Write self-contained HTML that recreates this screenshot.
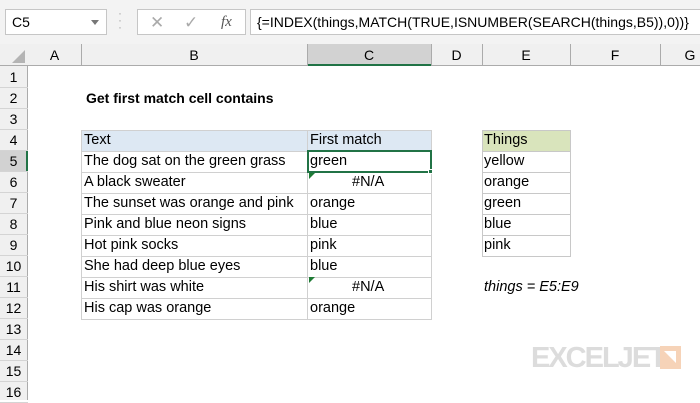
<!DOCTYPE html><html><head><style>
body{margin:0;width:700px;height:400px;overflow:hidden;background:#fff;font-family:"Liberation Sans",Calibri,sans-serif;position:relative}
.a{position:absolute;box-sizing:border-box}
.t{position:absolute;font-size:14.5px;line-height:21px;white-space:nowrap;color:#000}
</style></head><body>
<div class="a" style="left:0;top:0;width:700px;height:44px;background:#f3f3f3"></div>
<div class="a" style="left:5px;top:9px;width:102px;height:26px;background:#fff;border:1px solid #c6c6c6"></div>
<div class="t" style="left:12px;top:12px;font-size:14px">C5</div>
<div class="a" style="left:91px;top:20px;width:0;height:0;border-left:4px solid transparent;border-right:4px solid transparent;border-top:5px solid #777"></div>
<div class="t" style="left:118px;top:10px;color:#aaa;font-size:12px;line-height:7px">·<br>·<br>·</div>
<div class="a" style="left:137px;top:9px;width:109px;height:26px;background:#fff;border:1px solid #c6c6c6"></div>
<div class="t" style="left:150px;top:12px;color:#aaa;font-size:17px">✕</div>
<div class="t" style="left:184px;top:12px;color:#aaa;font-size:17px">✓</div>
<div class="t" style="left:221px;top:12px;color:#555;font-style:italic;font-family:'Liberation Serif',serif;font-size:15px">fx</div>
<div class="a" style="left:250px;top:9px;width:460px;height:26px;background:#fff;border:1px solid #c6c6c6"></div>
<div class="t" style="left:257px;top:12px;font-size:14px">{=INDEX(things,MATCH(TRUE,ISNUMBER(SEARCH(things,B5)),0))}</div>
<div class="a" style="left:0;top:44px;width:700px;height:22px;background:#f0f0f0;border-bottom:1px solid #ababab"></div>
<div class="a" style="left:307px;top:44px;width:124px;height:22px;background:#d2d2d2;border-bottom:2px solid #217346"></div>
<div class="a" style="left:12px;top:50px;width:0;height:0;border-left:13px solid transparent;border-bottom:13px solid #b4b4b4"></div>
<div class="a" style="left:0;top:66px;width:28px;height:334px;background:#f0f0f0;border-right:1px solid #ababab"></div>
<div class="a" style="left:0;top:151px;width:28px;height:21px;background:#d2d2d2;border-right:2px solid #217346"></div>
<div class="a" style="left:81px;top:130px;width:350px;height:21px;background:#dde8f3"></div>
<div class="a" style="left:482px;top:130px;width:88px;height:21px;background:#d9e4bc"></div>
<div id="g"></div>
<div class="t" style="left:86px;top:88px;font-weight:bold;font-size:14px">Get first match cell contains</div>
<div class="t" style="left:484px;top:277px;font-style:italic">things = E5:E9</div>
<div class="a" style="left:307px;top:150px;width:125px;height:23px;border:2px solid #217346"></div>
<div class="a" style="left:428px;top:169px;width:5px;height:5px;background:#217346;border:1px solid #fff"></div>
<div class="a" style="left:309px;top:173px;border-right:6px solid transparent;border-top:6px solid #1e7b34"></div>
<div class="a" style="left:309px;top:277px;border-right:6px solid transparent;border-top:6px solid #1e7b34"></div>
<div class="t" style="left:531px;top:341px;font-size:29px;font-weight:bold;color:#dcdcdc;letter-spacing:-2px;line-height:34px">EXCELJET</div>
<div class="a" style="left:660px;top:346px;width:21px;height:23px;background:#f6d3b8"></div>
<div class="a" style="left:664px;top:351px;border-left:12px solid transparent;border-top:12px solid #fff"></div>
<script>
var g=document.getElementById('g'),h='';
var cols=[[28,'A'],[81,'B'],[307,'C'],[431,'D'],[482,'E'],[570,'F'],[660,'G']],ends=[81,307,431,482,570,660,720];
cols.forEach(function(c,i){h+='<div class="a" style="left:'+(ends[i])+'px;top:44px;width:1px;height:22px;background:#ababab"></div>';
h+='<div class="t" style="left:'+c[0]+'px;width:'+(ends[i]-c[0])+'px;text-align:center;top:45px;font-size:14px">'+c[1]+'</div>';});
for(var r=1;r<=16;r++){var y=67+(r-1)*21;h+='<div class="t" style="left:0;width:27px;text-align:center;top:'+y+'px;font-size:14px">'+r+'</div><div class="a" style="left:0;top:'+(y+20)+'px;width:28px;height:1px;background:#d4d4d4"></div>';}
var B=['Text','The dog sat on the green grass','A black sweater','The sunset was orange and pink','Pink and blue neon signs','Hot pink socks','She had deep blue eyes','His shirt was white','His cap was orange'];
var C=['First match','green','#N/A','orange','blue','pink','blue','#N/A','orange'];
var E=['Things','yellow','orange','green','blue','pink'];
B.forEach(function(s,i){var y=130+i*21;h+='<div class="a" style="left:81px;top:'+y+'px;width:351px;height:22px;border:1px solid #d0d0d0"></div><div class="a" style="left:307px;top:'+y+'px;width:1px;height:22px;background:#d0d0d0"></div>';
h+='<div class="t" style="left:84px;top:'+y+'px">'+s+'</div>';
h+=C[i]=='#N/A'?'<div class="t" style="left:352px;top:'+y+'px">#N/A</div>':'<div class="t" style="left:310px;top:'+y+'px">'+C[i]+'</div>';});
E.forEach(function(s,i){var y=130+i*21;h+='<div class="a" style="left:482px;top:'+y+'px;width:89px;height:22px;border:1px solid #c8c8c8"></div><div class="t" style="left:484px;top:'+y+'px">'+s+'</div>';});
g.innerHTML=h;
</script>
</body></html>
